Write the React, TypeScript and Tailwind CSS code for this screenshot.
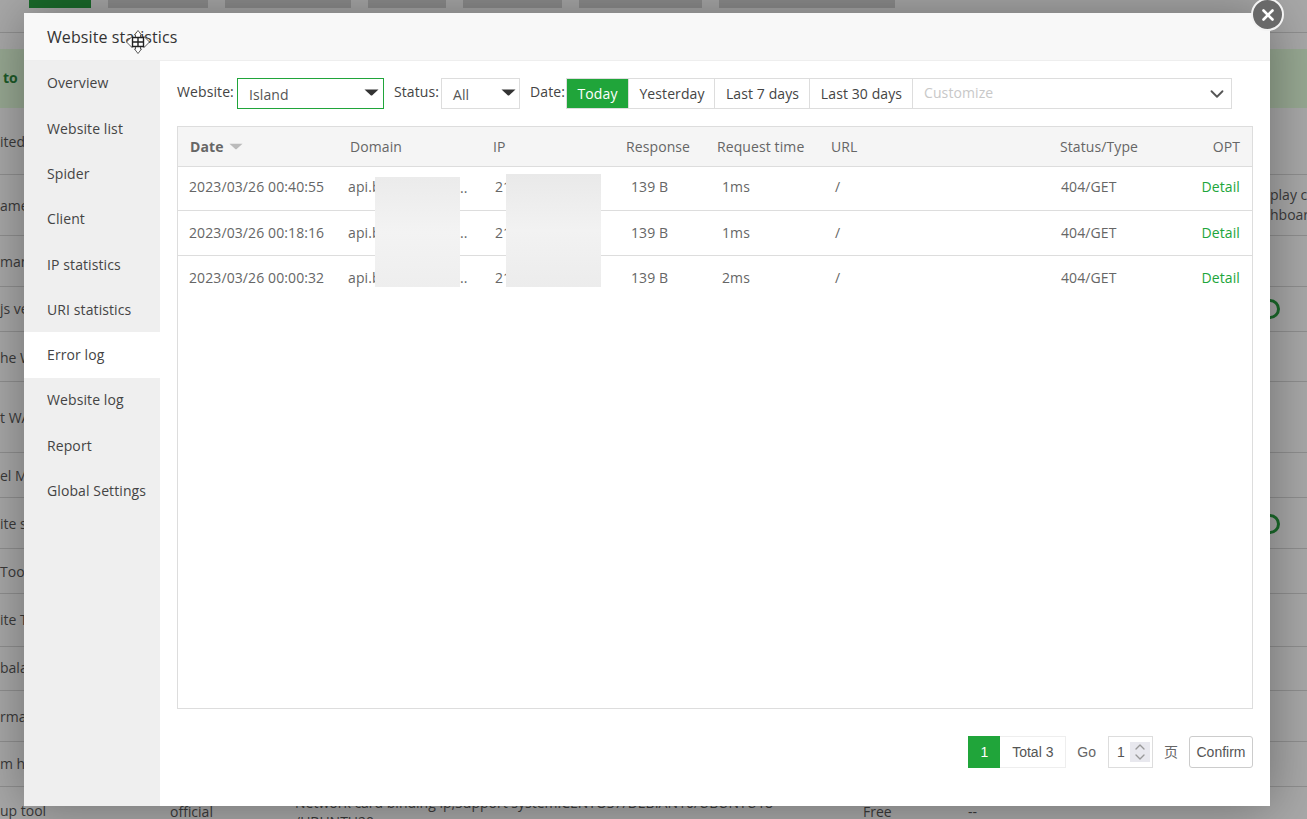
// Website statistics modal over a dimmed plugin list
import React from 'react';
import { ChevronDown, ChevronUp, X } from 'lucide-react';

const tabs = [
  'w-[62px] bg-[#1a6b2b] ml-[29px]',
  'w-[100px] bg-[#8d8d8d] ml-[17px]',
  'w-[126px] bg-[#8d8d8d] ml-[17px]',
  'w-[78px] bg-[#8d8d8d] ml-[17px]',
  'w-[99px] bg-[#8d8d8d] ml-[17px]',
  'w-[123px] bg-[#8d8d8d] ml-[17px]',
  'w-[176px] bg-[#8d8d8d] ml-[17px]',
];

// visible part of the page behind the dialog
const pageRows = [
  { h: 'h-[67px]', name: 'ited', top: 'pt-[23px]' },
  { h: 'h-[61px]', name: 'ame', top: 'pt-[20px]', right: ['play c', 'hboar'] },
  { h: 'h-[51px]', name: 'mana', top: 'pt-[15px]' },
  { h: 'h-[45px]', name: 'js ve', top: 'pt-[11px]', ring: 'top-[12px]' },
  { h: 'h-[50px]', name: 'he W', top: 'pt-[15px]' },
  { h: 'h-[71px]', name: 't WA', top: 'pt-[25px]' },
  { h: 'h-[45px]', name: 'el M', top: 'pt-[12px]' },
  { h: 'h-[51px]', name: 'ite s', top: 'pt-[15px]', ring: 'top-[16px]' },
  { h: 'h-[45px]', name: 'Tool', top: 'pt-[12px]' },
  { h: 'h-[53px]', name: 'ite T', top: 'pt-[15px]' },
  { h: 'h-[44px]', name: 'bala', top: 'pt-[10px]' },
  { h: 'h-[51px]', name: 'rma', top: 'pt-[15px]' },
  { h: 'h-[45px]', name: 'm ha', top: 'pt-[11px]' },
];

const menu = [
  'Overview',
  'Website list',
  'Spider',
  'Client',
  'IP statistics',
  'URI statistics',
  'Error log',
  'Website log',
  'Report',
  'Global Settings',
];

const logs = [
  { date: '2023/03/26 00:40:55', time: '1ms', row: 'h-[44px] border-b pb-[5px]' },
  { date: '2023/03/26 00:18:16', time: '1ms', row: 'h-[45px] border-b pb-[2px]' },
  { date: '2023/03/26 00:00:32', time: '2ms', row: 'h-[45px] pb-[2px]' },
];

const Arrow = ({ className }: { className: string }) => (
  <svg viewBox="0 0 15 7" className={className}>
    <path d="M0.5 0.5H14.5L8 6.5H7Z" fill="currentColor" />
  </svg>
);

const MoveCursor = () => (
  <svg viewBox="0 0 24 24" className="absolute left-[126px] top-[30px] w-6 h-6">
    <path
      d="M12 0.5L15.5 5H14.5V7.5H18V6.5L23.5 12L18 17.5V16.5H14.5V19H15.5L12 23.5L8.5 19H9.5V16.5H6V17.5L0.5 12L6 6.5V7.5H9.5V5H8.5Z"
      fill="#fff"
      stroke="#333"
      strokeWidth="0.8"
    />
    <path d="M6.5 7.5H17.5V16.5H6.5ZM12 7.5V16.5M6.5 12H17.5" fill="#fff" stroke="#222" strokeWidth="1.4" />
  </svg>
);

const StatsDialog = () => (
  <div className="absolute left-[24px] top-[13px] w-[1246px] h-[793px] bg-white flex flex-col tracking-[0.1px] shadow-[1px_1px_50px_rgba(0,0,0,0.35)] font-['Open_Sans','Noto_Sans_CJK_SC',sans-serif]">
    <div className="h-[48px] shrink-0 bg-[#f8f8f8] border-b border-[#eeeeee] pl-[23px] flex items-center text-[16px] text-[#333333]">
      Website statistics
    </div>

    <div className="flex flex-1 min-h-0">
      <div className="w-[136px] shrink-0 bg-[#efefef]">
        <div className="-mt-[0.5px]">
          {menu.map((item) => (
            <div
              key={item}
              className={`h-[45.3px] pl-[23px] flex items-center text-[14px] text-[#444444] ${
                item === 'Error log' ? 'bg-white' : ''
              }`}
            >
              <span className="-mt-[0.5px]">{item}</span>
            </div>
          ))}
        </div>
      </div>

      <div className="flex-1 pl-[17px] pr-[17px] pt-[17px] flex flex-col">
        {/* filters */}
        <div className="flex h-[31px] items-stretch text-[14px] text-[#444444]">
          <span className="pt-[3px] w-[60px]">Website:</span>
          <div className="w-[147px] border border-[#20a53a] pl-[11px] pr-[4px] flex items-center justify-between">
            <span className="pt-[1px] text-[#555555]">Island</span>
            <Arrow className="w-[15px] h-[7px] text-[#333333] mb-[3px]" />
          </div>
          <span className="pt-[3px] ml-[10px] w-[47px]">Status:</span>
          <div className="w-[79px] border border-[#dddddd] pl-[11px] pr-[3px] flex items-center justify-between">
            <span className="pt-[1px] text-[#555555]">All</span>
            <Arrow className="w-[15px] h-[7px] text-[#333333] mb-[3px]" />
          </div>
          <span className="pt-[3px] ml-[10px] w-[36px]">Date:</span>
          <div className="flex flex-1 mr-[21px] border border-[#dddddd]">
            <div className="w-[61px] bg-[#20a53a] text-white flex items-center justify-center">Today</div>
            <div className="w-[86px] pl-[1px] border-l border-[#dddddd] flex items-center justify-center">Yesterday</div>
            <div className="w-[95px] pl-[1px] border-l border-[#dddddd] flex items-center justify-center">Last 7 days</div>
            <div className="w-[103px] pl-[1px] border-l border-[#dddddd] flex items-center justify-center">Last 30 days</div>
            <div className="flex-1 border-l border-[#dddddd] pl-[11px] pr-[3px] flex items-center justify-between text-[#c8c8c8]">
              <span className="pb-[2px]">Customize</span>
              <ChevronDown className="w-[22px] h-[22px] text-[#555555]" strokeWidth={2} />
            </div>
          </div>
        </div>

        {/* log table */}
        <div className="mt-[17px] h-[583px] border border-[#dddddd] text-[14px] text-[#666666]">
          <div className="h-[40px] pb-[1px] bg-[#f5f5f5] border-b border-[#dddddd] grid grid-cols-[160px_143px_133px_91px_114px_229px_1fr] items-center">
            <span className="pl-[12px] font-bold flex items-center gap-[5px]">
              Date
              <Arrow className="w-[14px] h-[7px] text-[#bbbbbb]" />
            </span>
            <span className="pl-[12px]">Domain</span>
            <span className="pl-[12px]">IP</span>
            <span className="pl-[12px]">Response</span>
            <span className="pl-[12px]">Request time</span>
            <span className="pl-[12px]">URL</span>
            <div className="flex justify-between pl-[12px] pr-[12px]">
              <span>Status/Type</span>
              <span>OPT</span>
            </div>
          </div>
          {logs.map((log) => (
            <div
              key={log.date}
              className={`${log.row} border-[#dddddd] grid grid-cols-[160px_143px_133px_91px_114px_229px_1fr] items-center`}
            >
              <span className="pl-[11px]">{log.date}</span>
              <span className="pl-[10px]">api.b</span>
              <span className="pl-[14px]">21</span>
              <span className="pl-[17px]">139 B</span>
              <span className="pl-[17px]">{log.time}</span>
              <span className="pl-[16px]">/</span>
              <div className="flex justify-between pl-[13px] pr-[12px]">
                <span>404/GET</span>
                <span className="text-[#20a53a]">Detail</span>
              </div>
            </div>
          ))}
        </div>

        {/* pagination */}
        <div className="mt-[27px] h-[32px] flex justify-end items-stretch text-[14px] text-[#555555] tracking-normal font-['Liberation_Sans','Noto_Sans_CJK_SC',sans-serif]">
          <div className="w-[32px] bg-[#20a53a] text-white flex items-center justify-center">1</div>
          <div className="w-[66px] border border-l-0 border-[#eeeeee] flex items-center justify-center">Total 3</div>
          <div className="ml-[11px] flex items-center text-[#666666]">Go</div>
          <div className="ml-[12px] w-[45px] border border-[#dddddd] flex items-center pl-[8px] relative">
            1
            <div className="absolute left-[21px] top-[5px] w-[20px] h-[20px] bg-[#e8e8ee] flex flex-col items-center justify-center text-[#999999]">
              <ChevronUp className="w-[16px] h-[16px] -my-[3px]" strokeWidth={2} />
              <ChevronDown className="w-[16px] h-[16px] -my-[3px]" strokeWidth={2} />
            </div>
          </div>
          <div className="ml-[11px] flex items-center text-[#666666]">页</div>
          <div className="ml-[11px] w-[64px] border border-[#cccccc] rounded-[3px] flex items-center justify-center">
            Confirm
          </div>
        </div>
      </div>
    </div>
  </div>
);

const App: React.FC = () => {
  return (
    <div className="relative w-full h-[819px] overflow-hidden bg-[#a8a8a8] font-['Open_Sans',sans-serif] text-[14px] text-[#3a3a3a]">
      {/* dimmed page */}
      <div className="flex h-[8px]">
        {tabs.map((t) => (
          <div key={t} className={t} />
        ))}
      </div>
      <div className="mt-[24px] border-t border-[#8f8f8f] h-[17px]" />
      <div className="h-[59px] bg-[#97a892] pl-[3px] pt-[18px] font-bold text-[#1c5a28]">to</div>

      {pageRows.map((row) => (
        <div key={row.name} className={`${row.h} ${row.top} border-b border-[#8f8f8f] relative whitespace-nowrap`}>
          {row.name}
          {row.right && (
            <div className="absolute left-[1270px] top-[10px] leading-[20px]">
              {row.right.map((r) => (
                <div key={r}>{r}</div>
              ))}
            </div>
          )}
          {row.ring && (
            <div className={`absolute left-[1257px] ${row.ring} w-[23px] h-[20px] rounded-full border-[3px] border-[#1a6b2b]`} />
          )}
        </div>
      ))}

      <div className="flex pt-[13px]">
        <span className="w-[170px]">up tool</span>
        <span className="w-[125px] pt-[1px]">official</span>
        <span className="w-[568px] -mt-[7px] leading-[19px]">
          Network card binding ip,Support system:CENTOS7/DEBIAN10/UBUNTU18
          <br />
          /UBUNTU20
        </span>
        <span className="w-[105px] pt-[1px]">Free</span>
        <span className="pt-[1px]">--</span>
      </div>

      <StatsDialog />

      {/* redaction blocks over the table */}
      <div className="absolute left-[375px] top-[177px] w-[85px] h-[110px] bg-gradient-to-b from-[#ebebeb] via-[#f3f3f3] to-[#eeeeee]" />
      <div className="absolute left-[460px] top-[177px] w-[8px] h-[110px] text-[14px] text-[#666666] font-['Open_Sans',sans-serif]">
        <div className="h-[45px]">..</div>
        <div className="h-[45px]">..</div>
        <div>..</div>
      </div>
      <div className="absolute left-[506px] top-[174px] w-[95px] h-[113px] bg-gradient-to-b from-[#e9e9e9] via-[#f2f2f2] to-[#ececec]" />

      <MoveCursor />

      <button className="absolute left-[1251px] top-[-2px] w-[33px] h-[33px] rounded-full bg-[#696969] border-[2px] border-[#f3f3f3] flex items-center justify-center text-white">
        <X className="w-[18px] h-[18px]" strokeWidth={3.5} />
      </button>
    </div>
  );
};

export default App;
